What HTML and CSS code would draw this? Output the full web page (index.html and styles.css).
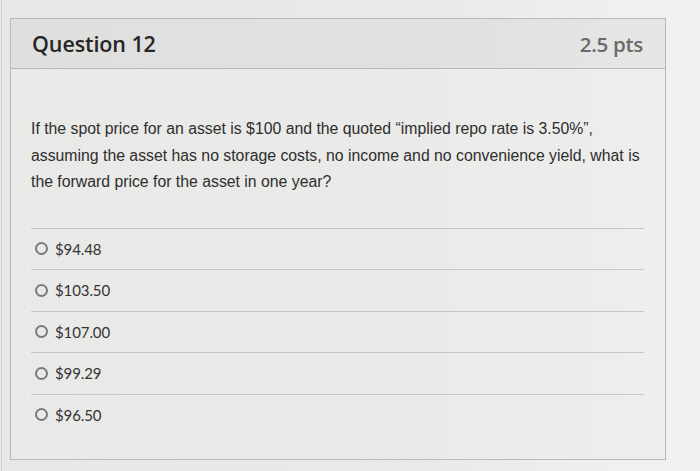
FILE: index.html
```html
<!DOCTYPE html>
<html>
<head>
<meta charset="utf-8">
<link rel="stylesheet" href="styles.css">
</head>
<body>
<div class="page">
  <div class="card">
    <div class="header">
      <div class="title">Question 12</div>
      <div class="pts">2.5 pts</div>
    </div>
    <div class="body">
      <p class="question">If the spot price for an asset is $100 and the quoted “implied repo rate is 3.50%”, assuming the asset has no storage costs, no income and no convenience yield, what is the forward price for the asset in one year?</p>
      <div class="answers">
        <div class="answer"><span class="radio"></span><span class="label">$94.48</span></div>
        <div class="answer"><span class="radio"></span><span class="label">$103.50</span></div>
        <div class="answer"><span class="radio"></span><span class="label">$107.00</span></div>
        <div class="answer"><span class="radio"></span><span class="label">$99.29</span></div>
        <div class="answer"><span class="radio"></span><span class="label">$96.50</span></div>
      </div>
    </div>
  </div>
</div>
</body>
</html>
```
FILE: styles.css
```css
html, body {
  margin: 0;
  padding: 0;
}
body {
  width: 700px;
  height: 471px;
  overflow: hidden;
  background: linear-gradient(90deg, #e7e7e5 0%, #e9e9e7 60%, #efefee 85%, #f0f0ef 100%);
  font-family: "Liberation Sans", Arial, sans-serif;
}
.page {
  padding: 18px 0 0 8px;
  border-left: 1px solid #cfcfcf;
  margin-left: 1px;
  height: 453px;
}
.card {
  width: 654px;
  height: 440px;
  border: 1px solid #b9b9b9;
  background: linear-gradient(90deg, #e9e9e7 0%, #eaeae8 60%, #eeeeec 100%);
}
.header {
  height: 49px;
  background: linear-gradient(90deg, #dfdfdd 0%, #e1e1df 70%, #e6e6e4 100%);
  border-bottom: 1px solid #b8b8b8;
  display: flex;
  align-items: center;
  justify-content: space-between;
  padding: 0 22px 0 21px;
  font-family: "Open Sans", sans-serif;
}
.title {
  font-size: 21.5px;
  font-weight: 600;
  color: #262626;
  letter-spacing: -0.1px;
}
.pts {
  font-size: 20.5px;
  font-weight: 600;
  color: #6a6a6a;
  letter-spacing: -0.3px;
}
.body {
  padding: 0 21px 0 20px;
}
.question {
  margin: 0;
  padding-top: 47px;
  font-size: 15.8px;
  line-height: 26.5px;
  color: #2e2e2e;
  padding-right: 0;
}
.answers {
  margin-top: 32px;
}
.answer {
  height: 40.5px;
  border-top: 1px solid #c6c6c4;
  display: flex;
  align-items: center;
  font-family: "Lato", sans-serif;
  font-size: 15px;
  color: #333;
}
.radio {
  box-sizing: border-box;
  width: 13px;
  height: 13px;
  border: 2px solid #7a7a7a;
  border-radius: 50%;
  margin-left: 4px;
  margin-right: 7px;
}
.label {
  letter-spacing: -0.1px;
}
```
